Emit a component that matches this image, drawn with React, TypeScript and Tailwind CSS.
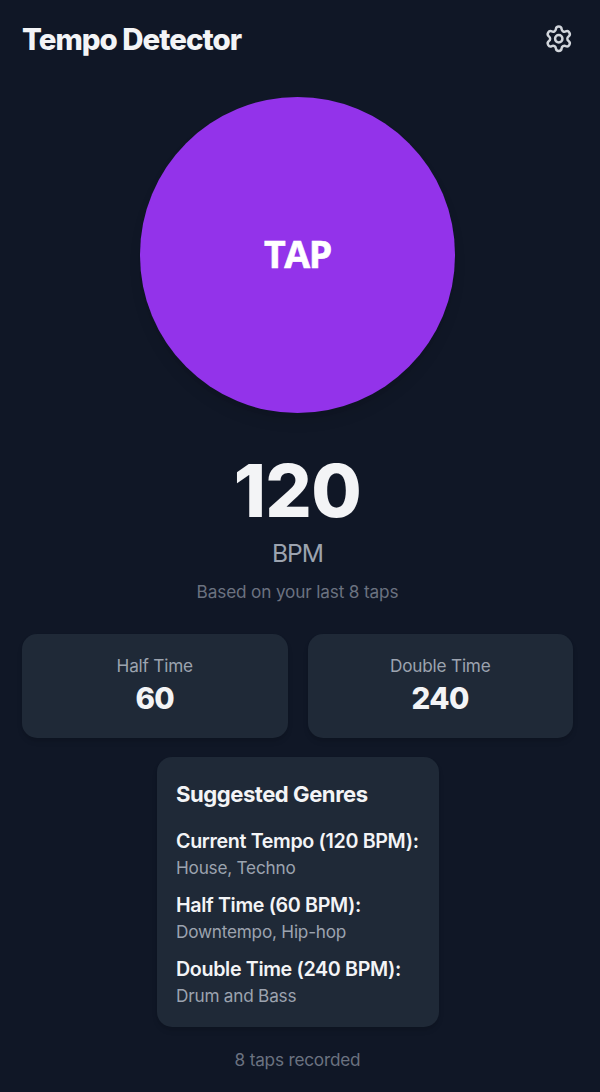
import React, { useState } from 'react';
import { Settings } from 'lucide-react';

const genres = [
  { label: 'Current Tempo (120 BPM):', list: 'House, Techno' },
  { label: 'Half Time (60 BPM):', list: 'Downtempo, Hip-hop' },
  { label: 'Double Time (240 BPM):', list: 'Drum and Bass' },
];

const TimeCard: React.FC<{ label: string; value: number }> = ({ label, value }) => (
  <div className="h-[103.4px] rounded-[15px] bg-[#1f2937] pt-5 text-center shadow-md">
    <div className="text-[17.2px] leading-[24px] tracking-[-0.2px] text-[#9ca3af]">{label}</div>
    <div className="text-[29.5px] leading-[41px] font-extrabold tracking-[-0.6px]">{value}</div>
  </div>
);

const App: React.FC = () => {
  const [bpm] = useState(120);
  const [taps] = useState(8);

  return (
    <div className="min-h-[1092px] bg-[#101726] font-['Inter',sans-serif] text-[#f3f4f6]">
      <div className="flex w-[595px] flex-col items-center px-[22px] pt-5">
        <header className="flex h-[39px] w-full items-start justify-between">
          <h1 className="text-[29.5px] leading-[39px] font-extrabold tracking-[-1px]">Tempo Detector</h1>
          <button className="mt-[3.5px] text-[#d1d5db]" aria-label="Settings">
            <Settings size={29.5} strokeWidth={2} />
          </button>
        </header>

        <button className="mt-[38.4px] h-[315.4px] w-[315.4px] rounded-full bg-[#9333ea] pb-[2px] font-['Open_Sans',sans-serif] text-[37.5px] font-bold tracking-[-1.4px] text-white shadow-lg [-webkit-text-stroke:0.6px_white]">
          TAP
        </button>

        {/* Tempo readout */}
        <div className="mt-[41.2px] text-center">
          <div className="text-[73px] leading-[74px] font-extrabold tracking-[-0.6px]">{bpm}</div>
          <div className="mt-[8px] text-[24.6px] leading-[34px] tracking-[-1px] text-[#9ca3af]">BPM</div>
          <div className="mt-[10px] text-[17.2px] leading-[24px] tracking-[-0.15px] text-[#6b7280]">Based on your last {taps} taps</div>
        </div>

        <div className="mt-[30.4px] grid w-full grid-cols-2 gap-5">
          <TimeCard label="Half Time" value={bpm / 2} />
          <TimeCard label="Double Time" value={bpm * 2} />
        </div>

        <div className="mt-[19.6px] h-[270px] w-[282px] rounded-[15px] bg-[#1f2937] px-[19.5px] pt-5 whitespace-nowrap shadow-md">
          <h2 className="mb-[14px] text-[22.1px] leading-[35px] font-bold tracking-[-0.48px]">Suggested Genres</h2>
          <div className="flex flex-col gap-[10px]">
            {genres.map((g) => (
              <div key={g.label}>
                <h3 className="text-[19.7px] leading-[30px] font-semibold tracking-[-0.36px]">{g.label}</h3>
                <p className="text-[17.2px] leading-[24px] tracking-[-0.22px] text-[#9ca3af]">{g.list}</p>
              </div>
            ))}
          </div>
        </div>

        <div className="mt-5 text-[17.2px] leading-[26px] tracking-[-0.2px] text-[#6b7280]">{taps} taps recorded</div>
      </div>
    </div>
  );
};

export default App;
